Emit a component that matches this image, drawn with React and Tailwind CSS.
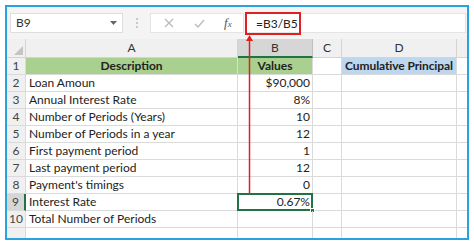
import React from "react";

const rows = [
  ["Loan Amoun", "$90,000"],
  ["Annual Interest Rate", "8%"],
  ["Number of Periods (Years)", "10"],
  ["Number of Periods in a year", "12"],
  ["First payment period", "1"],
  ["Last payment period", "12"],
  ["Payment's timings", "0"],
  ["Interest Rate", "0.67%"],
  ["Total Number of Periods", ""],
  ["", ""],
];

const cell = "border-r border-b border-[#dadada] h-[17px] leading-[16px]";

export default function App() {
  return (
    <div className="w-[474px] h-[244px] bg-white relative" style={{ fontFamily: "Lato, 'Open Sans', sans-serif" }}>
      <div className="absolute left-[5px] top-[5px] w-[464px] h-[235px] border-2 border-[#29a3df] overflow-hidden flex flex-col">
        {/* Formula bar */}
        <div className="h-[32px] flex items-center bg-[#f4f4f4] pl-[3px] pr-[1px] shrink-0">
          <div className="w-[113px] h-[20px] bg-white border border-[#dedede] flex items-center justify-between px-[5px] text-[12px] text-[#333]">
            <span>B9</span>
            <svg width="7" height="4" viewBox="0 0 7 4"><path d="M0 0h7L3.5 4z" fill="#666" /></svg>
          </div>
          <div className="w-[27px] flex flex-col items-center gap-[2px]">
            <span className="w-[2px] h-[2px] bg-[#c8c8c8]" />
            <span className="w-[2px] h-[2px] bg-[#c8c8c8]" />
            <span className="w-[2px] h-[2px] bg-[#c8c8c8]" />
          </div>
          <div className="w-[94px] h-[20px] bg-white border border-[#e4e4e4] flex items-center text-[#b8b8b8]">
            <svg className="ml-[13px]" width="10" height="10" viewBox="0 0 10 10"><path d="M1 1l8 8M9 1l-8 8" stroke="#b8b8b8" strokeWidth="1.2" /></svg>
            <svg className="ml-[20px]" width="11" height="9" viewBox="0 0 11 9"><path d="M1 5l3 3 6-7" stroke="#b8b8b8" strokeWidth="1.2" fill="none" /></svg>
            <span className="ml-[19px] italic text-[13px] text-[#555]" style={{ fontFamily: "'Liberation Serif', serif" }}>f<span className="text-[9px]">x</span></span>
          </div>
          <div className="flex-1 h-[20px] bg-white border border-[#e4e4e4] ml-[1px] relative">
            <div className="absolute left-[-1px] top-[-2px] w-[56px] h-[23px] border-2 border-[#e02020] flex items-center pl-[9px] text-[12px] text-[#222]">
              =B3/B5
            </div>
          </div>
        </div>

        {/* Sheet */}
        <div className="grid grid-cols-[19px_212px_75px_29px_115px_1fr] text-[12px] text-[#222]">
          {/* header row */}
          <div className="h-[19px] bg-[#f0f0f0] border-r border-b border-[#d4d4d4] flex items-end justify-end pr-[2px] pb-[2px]">
            <svg width="9" height="9" viewBox="0 0 9 9"><path d="M9 0v9H0z" fill="#c4c4c4" /></svg>
          </div>
          <div className="h-[19px] bg-[#f0f0f0] border-r border-b border-[#d4d4d4] text-center leading-[18px] text-[#333]">A</div>
          <div className="h-[19px] bg-[#d6d6d6] border-r border-[#c0c0c0] border-b-2 border-b-[#217346] text-center leading-[18px] text-[#333]">B</div>
          <div className="h-[19px] bg-[#f0f0f0] border-r border-b border-[#d4d4d4] text-center leading-[18px] text-[#333]">C</div>
          <div className="h-[19px] bg-[#f0f0f0] border-r border-b border-[#d4d4d4] text-center leading-[18px] text-[#333]">D</div>
          <div className="h-[19px] bg-[#f0f0f0] border-b border-[#d4d4d4]" />

          {/* row 1 */}
          <div className={`${cell} bg-[#f0f0f0] text-center text-[#444]`}>1</div>
          <div className={`${cell} bg-[#a9d08e] text-center font-bold`}>Description</div>
          <div className={`${cell} bg-[#a9d08e] text-center font-bold`}>Values</div>
          <div className={cell} />
          <div className={`${cell} bg-[#bdd7ee] text-center font-bold whitespace-nowrap tracking-[-0.1px]`}>Cumulative Principal</div>
          <div className="border-b border-[#dadada] h-[17px]" />

          {rows.map(([a, b], i) => {
            const n = i + 2;
            const sel = n === 9;
            return (
              <React.Fragment key={n}>
                <div
                  className={`${cell} text-center text-[#444] ${sel ? "bg-[#d6d6d6] border-r-2 border-r-[#217346]" : "bg-[#f0f0f0]"}`}
                >
                  {n === 11 ? "" : n}
                </div>
                <div className={`${cell} pl-[3px] whitespace-nowrap`}>{a}</div>
                <div className={`${cell} relative text-right pr-[2px]`}>
                  {sel && (
                    <>
                      <div className="absolute left-[-1px] top-[-1px] right-[-1px] bottom-[-1px] border-2 border-[#217346]" />
                      <div className="absolute right-[-3px] bottom-[-3px] w-[5px] h-[5px] bg-[#217346] border border-white" />
                    </>
                  )}
                  {b}
                </div>
                <div className={cell} />
                <div className={cell} />
                <div className="border-b border-[#dadada] h-[17px]" />
              </React.Fragment>
            );
          })}
        </div>
      </div>

      {/* red arrow */}
      <svg className="absolute left-0 top-0 pointer-events-none" width="474" height="244">
        <line x1="249.5" y1="194" x2="249.5" y2="40" stroke="#e02020" strokeWidth="1.5" />
        <path d="M249.5 35l-3.5 6h7z" fill="#e02020" />
      </svg>
    </div>
  );
}
